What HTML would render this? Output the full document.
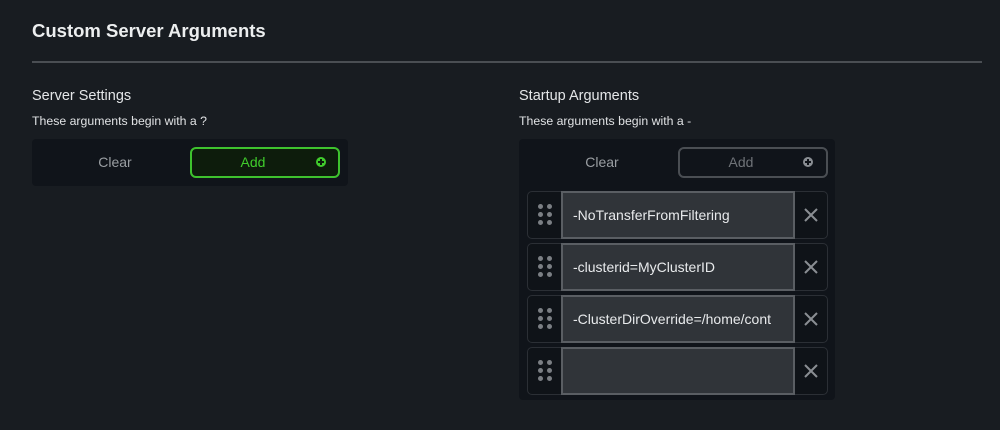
<!DOCTYPE html>
<html><head><style>
*{margin:0;padding:0;box-sizing:border-box}
body{width:1000px;height:430px;background:#181c21;font-family:"Liberation Sans",sans-serif;color:#e6e6e6;position:relative;overflow:hidden}
.a{position:absolute}
.title{left:32px;top:20px;font-size:18.5px;font-weight:bold;color:#eceeef}
.hr{left:32px;top:61px;width:950px;height:2px;background:#4a4e53}
.lbl{font-size:14.5px;color:#e4e6e8}
.sub{font-size:12.3px;color:#e0e2e4}
.panel{background:#10141a;border-radius:4px}
.clear{font-size:14px;color:#9a9ea2;text-align:center}
.btn{border-radius:6px;font-size:14px;text-align:center;line-height:27px;padding-right:24px}
.row{left:527px;width:301px;height:48px;border:1px solid #2b2f35;border-radius:5px;background:#0f1318}
.inp{position:absolute;left:33px;top:-1px;width:234px;height:48px;background:#303439;border:2px solid #5a5e63;font-size:14px;color:#e8eaec;padding-left:10px;line-height:44px;white-space:nowrap;overflow:hidden}
.dots{position:absolute;left:10px;top:12px;width:16px;height:22px}
.dots i{position:absolute;width:5px;height:5px;border-radius:50%;background:#7b7f84}
.x{position:absolute;left:276px;top:16px}
</style></head><body>
<div class="a title">Custom Server Arguments</div>
<div class="a hr"></div>

<div class="a lbl" style="left:32px;top:88px">Server Settings</div>
<div class="a sub" style="left:32px;top:114px">These arguments begin with a ?</div>
<div class="a panel" style="left:32px;top:139px;width:316px;height:47px"></div>
<div class="a clear" style="left:75px;top:154px;width:80px">Clear</div>
<div class="a btn" style="left:190px;top:147px;width:150px;height:31px;border:2px solid #3ec22e;background:#0d1c0c;color:#40cc2c">Add</div>
<div class="a" style="left:316px;top:157px;width:10px;height:10px;border-radius:50%;background:#40cc2c"></div>
<div class="a" style="left:318px;top:161px;width:6px;height:2px;background:#0d1c0c"></div>
<div class="a" style="left:320px;top:159px;width:2px;height:6px;background:#0d1c0c"></div>

<div class="a lbl" style="left:519px;top:88px">Startup Arguments</div>
<div class="a sub" style="left:519px;top:114px">These arguments begin with a -</div>
<div class="a panel" style="left:519px;top:139px;width:316px;height:261px"></div>
<div class="a clear" style="left:562px;top:154px;width:80px">Clear</div>
<div class="a btn" style="left:678px;top:147px;width:150px;height:31px;border:2px solid #4a4e53;color:#6f7378">Add</div>
<div class="a" style="left:803px;top:157px;width:10px;height:10px;border-radius:50%;background:#8a8e93"></div>
<div class="a" style="left:805px;top:161px;width:6px;height:2px;background:#10141a"></div>
<div class="a" style="left:807px;top:159px;width:2px;height:6px;background:#10141a"></div>

<div class="a row" style="top:191px"><div class="dots"><i style="left:0;top:0"></i><i style="left:9px;top:0"></i><i style="left:0;top:8px"></i><i style="left:9px;top:8px"></i><i style="left:0;top:16px"></i><i style="left:9px;top:16px"></i></div><div class="inp">-NoTransferFromFiltering</div><svg class="x" width="14" height="14"><path d="M1 1L13 13M13 1L1 13" stroke="#8a8e93" stroke-width="2"/></svg></div>
<div class="a row" style="top:243px"><div class="dots"><i style="left:0;top:0"></i><i style="left:9px;top:0"></i><i style="left:0;top:8px"></i><i style="left:9px;top:8px"></i><i style="left:0;top:16px"></i><i style="left:9px;top:16px"></i></div><div class="inp">-clusterid=MyClusterID</div><svg class="x" width="14" height="14"><path d="M1 1L13 13M13 1L1 13" stroke="#8a8e93" stroke-width="2"/></svg></div>
<div class="a row" style="top:295px"><div class="dots"><i style="left:0;top:0"></i><i style="left:9px;top:0"></i><i style="left:0;top:8px"></i><i style="left:9px;top:8px"></i><i style="left:0;top:16px"></i><i style="left:9px;top:16px"></i></div><div class="inp">-ClusterDirOverride=/home/cont</div><svg class="x" width="14" height="14"><path d="M1 1L13 13M13 1L1 13" stroke="#8a8e93" stroke-width="2"/></svg></div>
<div class="a row" style="top:347px"><div class="dots"><i style="left:0;top:0"></i><i style="left:9px;top:0"></i><i style="left:0;top:8px"></i><i style="left:9px;top:8px"></i><i style="left:0;top:16px"></i><i style="left:9px;top:16px"></i></div><div class="inp"></div><svg class="x" width="14" height="14"><path d="M1 1L13 13M13 1L1 13" stroke="#8a8e93" stroke-width="2"/></svg></div>
</body></html>
